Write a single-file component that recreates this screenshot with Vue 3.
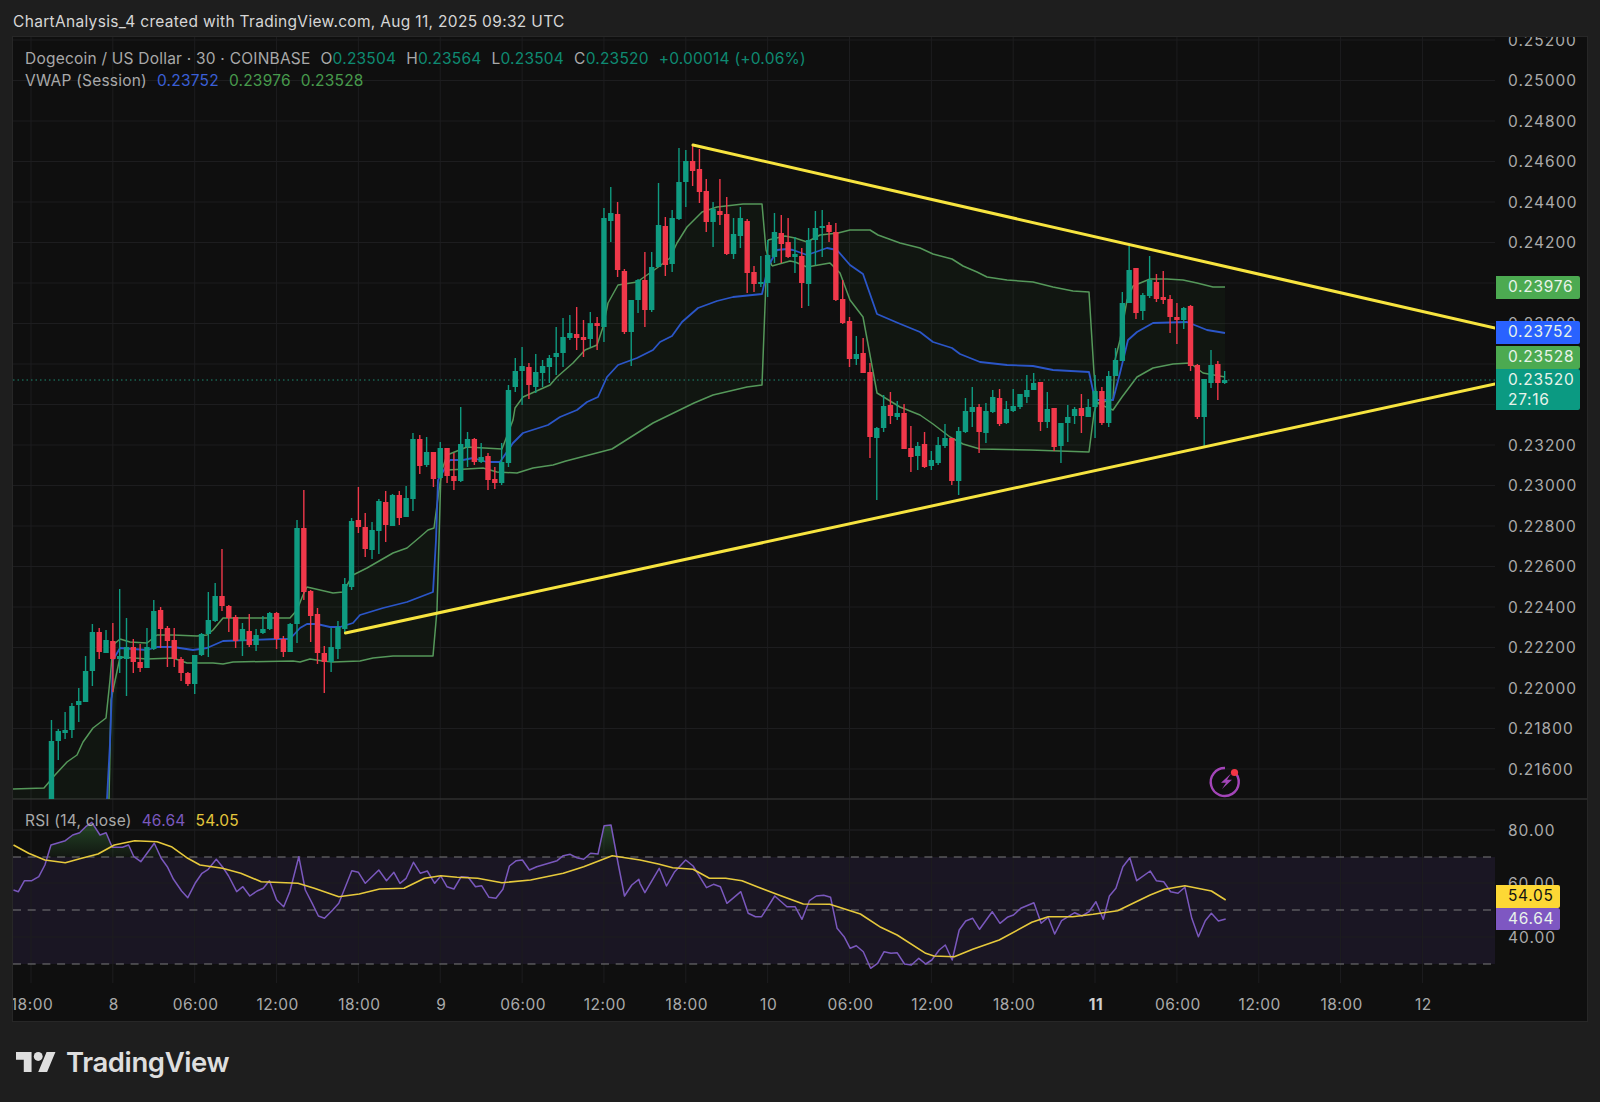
<script setup>
import { computed } from "vue";

// every chart coordinate is a page pixel, the svg viewBox starts at the chart's corner
const PLOT_RIGHT = 1495;
const stepX = 81.85 / 12;
const candleX = (k) => 31 + stepX * k;

const priceY = (p) => 40 + ((0.252 - p) / 0.002) * 40.5;
const prices = [];
for (let p = 0.252; p > 0.215; p -= 0.002) prices.push(+p.toFixed(3));

const hiddenPrices = [0.24, 0.236, 0.234];
const priceLabels = prices.filter((p) => !hiddenPrices.includes(p));

const times = ["18:00", "8", "06:00", "12:00", "18:00", "9", "06:00", "12:00", "18:00", "10", "06:00", "12:00", "18:00", "11", "06:00", "12:00", "18:00", "12"];
const ticks = times.map((label, i) => ({ label, x: 31 + 81.85 * i, bold: label === "11" }));

const rsiLevels = [
  { y: 830, label: "80.00" },
  { y: 883, label: "60.00" },
  { y: 937, label: "40.00" },
];
const rsiDashes = [857, 910, 964];

// up?, high, body top, body bottom, low. index 0 sits at k = 3
const rows = [
  [1,720,741,799,799],[1,729,731,741,760],[1,712,730,733,739],[1,703,706,730,738],[1,688,701,705,722],
  [1,656,671,702,702],[1,624,632,671,686],[0,628,632,652,659],[1,630,640,653,653],[0,623,641,659,692],
  [1,589,656,659,673],[1,618,647,659,696],[0,639,647,662,673],[0,644,662,668,672],[1,628,647,668,668],
  [1,600,611,649,650],[0,607,610,629,648],[0,626,628,641,667],[0,628,640,659,667],[0,657,659,673,681],
  [0,672,673,684,686],[1,655,655,684,694],[1,633,634,655,656],[1,592,620,634,657],[1,583,596,621,622],
  [0,549,596,606,611],[0,605,606,618,632],[0,615,617,641,648],[1,623,629,641,656],[0,614,631,645,647],
  [1,629,635,645,651],[1,616,629,633,634],[1,612,613,629,630],[0,612,613,639,649],[0,636,639,652,657],
  [1,623,624,652,652],[1,520,528,624,643],[0,490,528,592,600],[0,590,591,616,642],[0,608,614,653,664],
  [0,646,653,662,693],[1,628,647,662,672],[1,621,627,649,659],[1,578,584,629,634],[1,518,521,587,590],
  [0,487,520,527,533],[0,513,527,549,557],[1,522,530,550,559],[1,499,501,531,554],[0,491,502,525,542],
  [1,494,495,526,526],[0,491,495,518,525],[1,486,498,517,517],[1,433,439,499,511],[0,435,439,466,474],
  [1,437,452,465,467],[0,452,452,479,487],[1,442,448,478,478],[0,448,448,476,483],[0,453,476,481,490],
  [1,407,444,481,482],[1,432,439,447,467],[0,438,439,462,465],[1,443,457,462,463],[0,453,456,480,490],
  [0,467,479,483,489],[1,443,462,483,485],[1,385,390,463,467],[1,358,371,387,392],[1,347,366,371,405],
  [0,363,367,385,399],[1,354,372,387,393],[1,360,366,373,387],[1,355,358,367,383],[1,327,353,357,375],
  [1,318,337,353,367],[1,315,333,338,340],[0,307,334,338,350],[0,320,337,340,357],[1,312,323,339,347],
  [0,317,323,326,350],[1,208,218,327,342],[1,187,213,221,242],[0,202,214,270,277],[0,269,271,332,334],
  [1,300,300,332,366],[1,279,280,300,313],[0,252,280,310,327],[1,252,267,310,312],[1,183,225,267,267],
  [0,217,226,265,276],[1,210,218,264,272],[1,148,182,219,220],[1,150,161,182,207],[0,144,161,171,186],
  [0,149,169,192,203],[0,179,191,222,232],[1,202,209,222,247],[0,179,211,215,225],[0,197,214,254,255],
  [1,218,234,254,259],[1,207,218,236,248],[0,219,221,273,293],[0,266,272,284,292],[1,256,282,284,287],
  [1,240,255,283,297],[1,213,232,257,263],[0,215,233,244,263],[0,218,242,257,258],[1,237,254,257,273],
  [0,248,256,283,308],[1,228,240,284,306],[1,211,228,240,265],[1,210,226,228,257],[0,222,225,232,242],
  [0,223,232,300,301],[0,280,299,323,324],[0,317,321,359,367],[1,336,354,359,365],[0,338,353,373,373],
  [0,363,372,437,458],[1,427,428,438,500],[1,395,406,428,432],[0,392,405,416,424],[1,401,413,417,420],
  [0,404,413,449,449],[0,426,448,457,472],[1,442,446,456,470],[0,432,444,467,468],[1,451,460,466,470],
  [1,437,445,463,465],[1,424,438,446,448],[0,438,438,481,485],[1,427,431,481,495],[1,398,411,432,433],
  [1,387,407,412,427],[0,404,407,432,453],[1,403,411,433,443],[1,390,397,412,413],[0,389,398,424,426],
  [1,401,409,423,424],[1,389,406,411,412],[1,394,394,407,409],[1,375,390,397,403],[1,373,383,390,390],
  [0,382,382,422,431],[1,392,409,422,428],[0,408,408,447,451],[1,423,423,446,463],[1,405,417,423,442],
  [1,407,409,416,424],[0,394,408,416,433],[1,399,407,417,417],[1,375,391,407,438],[0,387,391,423,425],
  [1,371,376,423,427],[1,348,360,376,376],[1,292,303,361,361],[1,246,270,303,303],[0,268,268,313,319],
  [1,293,295,311,320],[1,256,280,296,298],[0,274,282,299,302],[0,271,297,300,304],[0,295,299,317,333],
  [0,303,317,320,344],[1,307,308,320,329],[0,305,306,366,371],[0,364,365,417,419],[1,379,379,417,447],
  [1,350,365,383,388],[0,361,364,383,400],[1,371,380,383,384],
];

const candles = rows.map(([up, high, top, bottom, low], i) => ({
  x: candleX(i + 3),
  up,
  high,
  low,
  top,
  h: Math.max(bottom - top, 1.5),
}));

// vwap bands, one per session
const sessions = [
  {
    upper: [[13,789],[44,788],[55,775],[67,762],[77,755],[83,742],[93,728],[106,718],[110,680],[113,645],[120,639]],
    lower: [[111,820],[13,820]],
    mid: [],
  },
  {
    upper: [[120,639],[130,642],[147,643],[157,635],[173,635],[197,636],[207,635],[213,630],[223,618],[240,618],[290,618],[297,610],[303,595],[307,587],[333,593],[343,592],[353,575],[367,568],[393,553],[407,548],[420,537],[428,530],[434,528],[439,490],[442,470],[447,455]],
    lower: [[441,470],[437,610],[433,656],[393,656],[373,658],[360,661],[333,662],[323,661],[310,659],[300,662],[293,661],[233,662],[223,664],[213,663],[187,663],[173,658],[147,659],[120,657],[111,700],[109,799]],
    mid: [[107,799],[110,743],[113,660],[120,648],[147,650],[157,647],[173,647],[193,650],[207,648],[223,641],[277,639],[290,639],[300,628],[307,624],[317,624],[330,627],[340,627],[353,623],[360,615],[383,608],[407,602],[433,592],[436,540],[438,480],[450,460]],
  },
  {
    upper: [[447,455],[467,447],[502,449],[513,420],[515,408],[523,397],[550,385],[557,377],[573,363],[585,350],[597,345],[603,327],[608,303],[618,285],[637,282],[657,268],[670,258],[677,243],[687,227],[702,212],[717,207],[743,204],[762,204],[766,250],[772,266]],
    lower: [[768,240],[766,280],[762,385],[747,387],[713,395],[694,403],[653,423],[612,449],[566,461],[553,465],[533,468],[517,473],[497,472],[483,468],[467,469],[447,470]],
    mid: [[450,460],[463,460],[473,458],[487,462],[500,462],[513,443],[523,433],[548,425],[560,417],[577,410],[587,402],[598,397],[607,377],[618,365],[637,358],[653,350],[660,342],[672,336],[682,322],[698,308],[717,301],[733,297],[762,294],[768,267]],
  },
  {
    upper: [[768,240],[785,236],[795,238],[807,242],[820,235],[838,233],[850,230],[870,230],[878,235],[900,243],[920,248],[933,254],[952,259],[963,266],[977,272],[987,277],[1007,280],[1033,282],[1053,287],[1073,291],[1089,292],[1094,373],[1097,403]],
    lower: [[1097,403],[1094,413],[1089,452],[1030,450],[980,449],[963,444],[950,437],[933,424],[920,415],[900,407],[877,393],[863,317],[850,300],[840,273],[830,263],[807,267],[795,262],[790,261],[772,266]],
    mid: [[768,267],[777,250],[787,249],[793,250],[807,255],[827,248],[837,250],[850,265],[863,274],[877,314],[898,323],[920,332],[933,342],[952,348],[960,354],[980,362],[1007,365],[1033,366],[1053,370],[1089,372],[1095,400]],
  },
  {
    upper: [[1097,403],[1113,400],[1115,360],[1120,340],[1127,300],[1133,286],[1150,279],[1167,279],[1183,280],[1197,283],[1213,287],[1225,287]],
    lower: [[1225,377],[1203,373],[1190,363],[1173,364],[1153,368],[1137,377],[1122,397],[1113,410],[1097,403]],
    mid: [[1095,400],[1113,400],[1120,373],[1128,340],[1137,332],[1153,323],[1187,322],[1207,330],[1225,333]],
  },
];

const toPts = (list) => list.map((p) => p.join(",")).join(" ");
const bands = computed(() =>
  sessions.map((s) => ({
    upper: toPts(s.upper),
    lower: toPts(s.lower),
    mid: toPts(s.mid),
    fill: toPts([...s.upper, ...s.lower]),
  }))
);

// rsi points were read off at 2.45x horizontally and 3x vertically
const rsiPts = (offset, raw) => {
  const out = [];
  for (let i = 0; i < raw.length; i += 2) {
    out.push([+(offset + raw[i] / 2.45).toFixed(1), +(790 + raw[i + 1] / 3).toFixed(1)]);
  }
  return out;
};

const rsiRaw = [
  ...rsiPts(0, [33,300,45,305,60,272,78,272,95,260,110,225,125,165,160,152,178,135,195,128,210,110,225,97,245,135,260,128,275,172,300,172,315,165,328,200,345,215,378,160,395,205,410,230,425,268,445,303,460,323,478,280,495,250,510,238,530,208,545,230,560,258,580,305,595,290,612,318,630,303,645,295,660,272,678,330,695,350,710,305,732,200,748,300,765,340,780,378,795,385,815,360,830,340,862,242,878,247,895,280,928,240,947,272,965,247,980,280,995,265,1013,217,1030,250,1047,243,1065,280,1080,258,1095,290,1112,297,1130,260,1147,262,1165,290,1180,287,1198,322,1215,325,1232,298,1248,228,1265,212,1280,210,1297,240,1315,230,1365,212,1380,197,1397,193,1413,203,1430,208,1447,190,1465,192,1480,107,1497,105,1515,225,1530,318,1548,285,1565,268]),
  ...rsiPts(640, [0,280,12,308,47,235,65,288,85,245,112,210,130,228,163,293,180,283,197,290,213,340,247,305,265,370,283,380,298,380,330,318,360,350,380,350,397,388,415,332,432,318,450,316,467,322,483,415,500,440,515,475,530,467,547,485,565,535,582,520,598,485,615,490,630,488,648,522,665,525,683,505,700,522,715,510,733,480,748,465,765,510,782,420,798,393,815,385,832,418,863,365,882,400,900,382,915,375,933,355,965,338,983,400,1000,382,1016,432,1033,392,1065,368,1083,378,1100,365,1117,335,1135,388,1150,318,1166,295,1183,230,1200,203,1217,272,1250,243,1265,272,1283,275,1300,305,1318,310,1335,292,1352,385,1368,440,1385,392,1400,370,1417,393,1435,387]),
];

const rsiMaRaw = [
  ...rsiPts(0, [33,165,70,190,110,210,160,218,200,205,240,192,280,165,330,152,385,155,420,170,460,205,490,225,545,235,590,250,640,275,730,280,770,295,830,320,880,312,930,297,990,295,1040,265,1080,257,1120,262,1170,265,1230,278,1300,270,1380,250,1430,230,1500,197,1568,210]),
  ...rsiPts(640, [45,222,80,233,130,238,170,265,210,265,250,272,290,292,340,315,400,342,465,343,540,372,590,412,630,435,700,490,720,498,770,500,815,478,880,450,960,397,1000,380,1060,380,1110,373,1170,362,1250,315,1285,298,1335,287,1400,303,1435,330]),
];

const rsiLine = toPts(rsiRaw);
const rsiMa = toPts(rsiMaRaw);
const rsiOver = toPts([[rsiRaw[0][0], 857], ...rsiRaw, [rsiRaw[rsiRaw.length - 1][0], 857]]);
const rsiUnder = toPts([[rsiRaw[0][0], 964], ...rsiRaw, [rsiRaw[rsiRaw.length - 1][0], 964]]);

const legendOhlc = [
  { k: "O", v: "0.23504" },
  { k: "H", v: "0.23564" },
  { k: "L", v: "0.23504" },
  { k: "C", v: "0.23520" },
];

const tags = [
  { top: 239, h: 23, cls: "tag--green", text: ["0.23976"] },
  { top: 284, h: 23, cls: "tag--blue", text: ["0.23752"] },
  { top: 309, h: 23, cls: "tag--green", text: ["0.23528"] },
  { top: 332, h: 41, cls: "tag--teal", text: ["0.23520", "27:16"] },
  { top: 848, h: 23, cls: "tag--yellow tag--short", text: ["54.05"] },
  { top: 871, h: 22, cls: "tag--purple tag--short", text: ["46.64"] },
];
</script>

<template>
  <div class="page">
    <div class="caption">ChartAnalysis_4 created with TradingView.com, Aug 11, 2025 09:32 UTC</div>

    <div class="chart">
      <svg class="chart__svg" viewBox="13 37 1574 984" width="1574" height="984">
        <defs>
          <clipPath id="mainPane"><rect x="13" y="37" width="1482" height="762" /></clipPath>
          <clipPath id="overZone"><rect x="13" y="800" width="1482" height="57" /></clipPath>
          <clipPath id="underZone"><rect x="13" y="964" width="1482" height="19" /></clipPath>
          <linearGradient id="overFill" gradientUnits="userSpaceOnUse" x1="0" y1="815" x2="0" y2="857">
            <stop offset="0" stop-color="#4caf50" stop-opacity="0.4" />
            <stop offset="1" stop-color="#4caf50" stop-opacity="0.05" />
          </linearGradient>
          <linearGradient id="underFill" gradientUnits="userSpaceOnUse" x1="0" y1="964" x2="0" y2="975">
            <stop offset="0" stop-color="#f23645" stop-opacity="0.05" />
            <stop offset="1" stop-color="#f23645" stop-opacity="0.35" />
          </linearGradient>
        </defs>

        <!-- grid -->
        <g class="grid">
          <line v-for="t in ticks" :key="t.x" :x1="t.x" :x2="t.x" y1="37" y2="983" />
          <line v-for="p in prices" :key="p" x1="13" :x2="PLOT_RIGHT" :y1="priceY(p)" :y2="priceY(p)" />
          <line v-for="l in rsiLevels" :key="l.y" x1="13" :x2="PLOT_RIGHT" :y1="l.y" :y2="l.y" />
        </g>

        <line class="pane-split" x1="13" x2="1587" y1="799" y2="799" />

        <!-- price pane -->
        <g clip-path="url(#mainPane)">
          <polygon v-for="(b, i) in bands" :key="'f' + i" class="band-fill" :points="b.fill" />
          <polyline v-for="(b, i) in bands" :key="'u' + i" class="band" :points="b.upper" />
          <polyline v-for="(b, i) in bands" :key="'l' + i" class="band" :points="b.lower" />
          <polyline v-for="(b, i) in bands" :key="'m' + i" class="mid" :points="b.mid" />

          <line class="last-price" x1="13" :x2="PLOT_RIGHT" y1="380" y2="380" />

          <g v-for="c in candles" :key="c.x" :class="c.up ? 'up' : 'down'">
            <line :x1="c.x" :x2="c.x" :y1="c.high" :y2="c.low" />
            <rect :x="c.x - 2.7" :y="c.top" width="5.4" :height="c.h" />
          </g>

          <line class="trend" x1="693" y1="145" x2="1495" y2="328" />
          <line class="trend" x1="345.5" y1="633" x2="1495" y2="384" />
        </g>

        <!-- alert badge -->
        <g class="alert">
          <path class="alert__ring" d="M1234 771.5a14 14 0 1 1-9-3.5" />
          <path class="alert__bolt" d="M1231 773.5l-10 9.2h5l-4 6.3 10-9.2h-5z" />
          <circle class="alert__dot" cx="1234.5" cy="772.5" r="3.6" />
        </g>

        <!-- rsi pane -->
        <rect class="rsi-band" x="13" y="857" :width="PLOT_RIGHT - 13" height="107" />
        <g class="grid">
          <line v-for="l in rsiLevels" :key="l.y" x1="13" :x2="PLOT_RIGHT" :y1="l.y" :y2="l.y" />
          <line v-for="t in ticks" :key="t.x" :x1="t.x" :x2="t.x" y1="857" y2="964" />
        </g>
        <line v-for="y in rsiDashes" :key="y" class="rsi-dash" x1="13" :x2="PLOT_RIGHT" :y1="y" :y2="y" />
        <polygon class="rsi-over" clip-path="url(#overZone)" :points="rsiOver" />
        <polygon class="rsi-under" clip-path="url(#underZone)" :points="rsiUnder" />
        <polyline class="rsi-line" :points="rsiLine" />
        <polyline class="rsi-ma" :points="rsiMa" />

        <!-- axes -->
        <text v-for="p in priceLabels" :key="'t' + p" class="axis" x="1508" :y="priceY(p) + 5.5">{{ p.toFixed(5) }}</text>
        <text v-for="l in rsiLevels" :key="'r' + l.y" class="axis" x="1508" :y="l.y + 5.5">{{ l.label }}</text>
        <text
          v-for="t in ticks"
          :key="'x' + t.x"
          class="axis axis--time"
          :class="{ 'axis--bold': t.bold }"
          :x="t.x + 1"
          y="1010"
        >{{ t.label }}</text>
      </svg>

      <div class="legend">
        <div class="legend__row">
          <span>Dogecoin / US Dollar · 30 · COINBASE</span>
          <span v-for="o in legendOhlc" :key="o.k" class="legend__ohlc">{{ o.k }}<b>{{ o.v }}</b></span>
          <b class="legend__change">+0.00014 (+0.06%)</b>
        </div>
        <div class="legend__row">
          <span>VWAP (Session)</span>
          <b class="val-blue">0.23752</b>
          <b class="val-green">0.23976</b>
          <b class="val-green">0.23528</b>
        </div>
      </div>

      <div class="legend legend--rsi">
        <div class="legend__row">
          <span>RSI (14, close)</span>
          <b class="val-purple">46.64</b>
          <b class="val-yellow">54.05</b>
        </div>
      </div>

      <div
        v-for="t in tags"
        :key="t.top"
        class="tag"
        :class="t.cls"
        :style="{ top: t.top + 'px', height: t.h + 'px' }"
      >
        <span v-for="line in t.text" :key="line">{{ line }}</span>
      </div>
    </div>

    <div class="brand">
      <svg class="brand__mark" viewBox="0 4 36 18" width="40" height="20">
        <path d="M14 22H7V11H0V4h14v18zM28 22h-8l7.5-18h8L28 22z" />
        <circle cx="20" cy="8" r="4" />
      </svg>
      <span class="brand__name">TradingView</span>
    </div>
  </div>
</template>

<style>
html,
body {
  background: #1e1e1e;
}
</style>

<style scoped>
.page {
  width: 1600px;
  height: 1102px;
  overflow: hidden;
  background: #1e1e1e;
  font-family: Inter, "Liberation Sans", sans-serif;
  display: flex;
  flex-direction: column;
}

.caption {
  height: 37px;
  padding: 14px 0 0 13px;
  box-sizing: border-box;
  color: #d6d6d6;
  font-size: 15.5px;
  line-height: 16px;
  letter-spacing: 0.32px;
  white-space: nowrap;
}

.chart {
  position: relative;
  width: 1574px;
  height: 984px;
  margin-left: 13px;
  background: #0f0f0f;
  outline: 1px solid #272727;
  overflow: hidden;
}

.chart__svg {
  display: block;
}

.grid line {
  stroke: #1d1d1f;
  stroke-width: 1;
}

.pane-split {
  stroke: #2f2f2f;
  stroke-width: 1.5;
}

.band-fill {
  fill: rgba(76, 175, 80, 0.045);
  stroke: none;
}

.band {
  fill: none;
  stroke: #55985a;
  stroke-width: 1.5;
  stroke-linejoin: round;
}

.mid {
  fill: none;
  stroke: #2b56c8;
  stroke-width: 1.8;
  stroke-linejoin: round;
}

.last-price {
  stroke: #1d8a72;
  stroke-width: 1;
  stroke-dasharray: 1.5 3;
}

.up line {
  stroke: #0f9b81;
  stroke-width: 1.4;
}

.up rect {
  fill: #0f9b81;
}

.down line {
  stroke: #f0384a;
  stroke-width: 1.4;
}

.down rect {
  fill: #f0384a;
}

.trend {
  stroke: #f7e43f;
  stroke-width: 3;
  stroke-linecap: round;
}

.alert__ring {
  fill: none;
  stroke: #a345b8;
  stroke-width: 2.4;
}

.alert__bolt {
  fill: #a345b8;
}

.alert__dot {
  fill: #f23645;
}

.rsi-band {
  fill: #1a1623;
}

.rsi-dash {
  stroke: #7a7a7d;
  stroke-width: 1;
  stroke-dasharray: 8 6.7;
}

.rsi-over {
  fill: url(#overFill);
}

.rsi-under {
  fill: url(#underFill);
}

.rsi-line {
  fill: none;
  stroke: #7a58bd;
  stroke-width: 1.5;
  stroke-linejoin: round;
}

.rsi-ma {
  fill: none;
  stroke: #e6c93c;
  stroke-width: 1.6;
  stroke-linejoin: round;
}

.axis {
  fill: #aaaaaa;
  font-size: 15.5px;
  letter-spacing: 1px;
}

.axis--time {
  text-anchor: middle;
  letter-spacing: 0.5px;
}

.axis--bold {
  font-weight: 700;
  fill: #d0d0d0;
}

.legend {
  position: absolute;
  top: 11px;
  left: 12px;
  color: #a9a9a9;
  font-size: 15.5px;
  line-height: 22px;
  letter-spacing: 0.22px;
  white-space: nowrap;
}

.legend b {
  font-weight: 400;
}

.legend--rsi {
  top: 773px;
}

.legend__row {
  display: flex;
  gap: 10px;
}

.legend__ohlc b,
.legend__change {
  color: #0e8a72;
}

.val-blue {
  color: #3a5fd6;
}

.val-green {
  color: #479a4c;
}

.val-purple {
  color: #7a58bd;
}

.val-yellow {
  color: #e3c63c;
}

.tag {
  position: absolute;
  left: 1483px;
  width: 84px;
  padding: 1px 0 0 12px;
  box-sizing: border-box;
  border-radius: 0 2px 2px 0;
  color: #e8f3ea;
  font-size: 15.5px;
  line-height: 20px;
  letter-spacing: 0.7px;
  display: flex;
  flex-direction: column;
}

.tag--short {
  width: 64px;
}

.tag--green {
  background: #4caa51;
}

.tag--blue {
  background: #2962ff;
}

.tag--teal {
  background: #0b9a82;
}

.tag--yellow {
  background: #fdd835;
  color: #131313;
}

.tag--purple {
  background: #7e57c2;
}

.brand {
  display: flex;
  align-items: center;
  gap: 10px;
  padding: 24px 0 0 16px;
  color: #dedede;
}

.brand__mark {
  fill: #dedede;
  flex: none;
}

.brand__name {
  font-size: 27.5px;
  font-weight: 600;
  letter-spacing: -0.4px;
  line-height: 34px;
}
</style>
